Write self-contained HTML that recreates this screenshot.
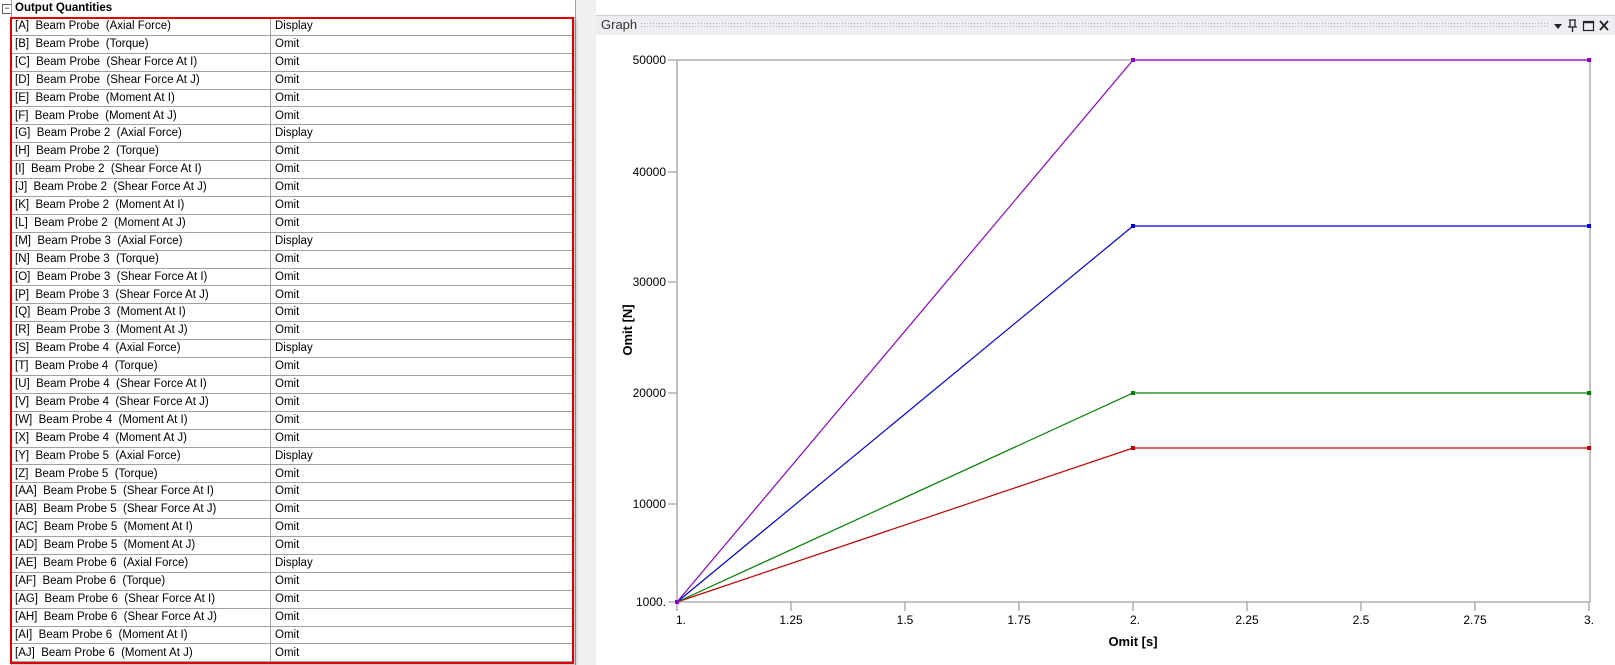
<!DOCTYPE html>
<html><head><meta charset="utf-8"><style>
body{margin:0;width:1615px;height:665px;overflow:hidden;background:#fff;font-family:"Segoe UI","Liberation Sans",sans-serif;font-size:11.5px;color:#000;position:relative}
.abs{position:absolute}
.row{position:absolute;left:11px;width:562px;height:17.9px;border-bottom:1px solid #a0a0a0;box-sizing:border-box;line-height:17px;white-space:pre}
.row span{position:absolute;left:4px}
.row b{position:absolute;left:264px;font-weight:normal}
</style></head><body>
<div class="abs" style="left:0;top:0;width:575px;height:665px;background:#fff;border-right:1px solid #a0a0a0"></div>
<div class="abs" style="left:576px;top:0;width:20px;height:665px;background:#f0f0f0"></div>
<div class="abs" style="left:2px;top:4px;width:8px;height:8px;border:1px solid #606060;background:#fff;font-size:9px;line-height:7px;text-align:center">−</div>
<div class="abs" style="left:12px;top:0;width:563px;height:18px;border-bottom:1px solid #a0a0a0;box-sizing:border-box;font-weight:bold;line-height:17px;padding-left:3px">Output Quantities</div>
<div class="abs" style="left:11px;top:0;width:1px;height:665px;background:#a0a0a0"></div>
<div id="rows"></div>
<div class="abs" style="left:270px;top:18px;width:1px;height:645px;background:#a0a0a0"></div>
<div class="abs" style="left:10px;top:17px;width:560px;height:643px;border:2px solid #e00000;box-shadow:2px 2px 3px rgba(0,0,0,.25)"></div>
<!-- graph -->
<div class="abs" style="left:596px;top:15px;width:1019px;height:20px;background:#eeeef2;border-top:1px solid #ccccd8;box-sizing:border-box"></div>
<div class="abs" style="left:601px;top:16px;font-size:13px;color:#333;line-height:18px">Graph</div>
<div class="abs" style="left:640px;top:22px;width:910px;height:5px;background-image:radial-gradient(#b0b0b0 0.6px,transparent 0.8px);background-size:3px 3px"></div>
<svg class="abs" style="left:1550px;top:15px" width="65" height="20">
<path d="M4 9h8l-4 5z" fill="#222"/>
<path d="M19 5h7M20 5v7h5V5M18 12h9M22.5 12v5" stroke="#222" fill="none" stroke-width="1.3"/>
<rect x="33.5" y="6.5" width="10" height="9" fill="none" stroke="#222" stroke-width="1.2"/><line x1="33.5" y1="7.5" x2="43.5" y2="7.5" stroke="#222" stroke-width="1.5"/>
<path d="M50 6l8 9M58 6l-8 9" stroke="#222" stroke-width="1.8"/>
</svg>
<svg class="abs" style="left:596px;top:35px" width="1019" height="630" font-family="Segoe UI, Liberation Sans, sans-serif" font-size="12">
<g transform="translate(-596,-35)">
<g stroke="#a0a0a0" stroke-width="1.3" fill="none">
<path d="M677 60V602H1590V60H677"/>
<path d="M668 60h9M668 172h9M668 282h9M668 393h9M668 504h9M668 602h9"/>
<path d="M677 602v9M791 602v9M905 602v9M1019 602v9M1133 602v9M1247 602v9M1361 602v9M1475 602v9M1589 602v9"/>
</g>
<g text-anchor="end" fill="#000">
<text x="666" y="64">50000</text><text x="666" y="176">40000</text><text x="666" y="286">30000</text><text x="666" y="397">20000</text><text x="666" y="508">10000</text><text x="666" y="606">1000.</text>
</g>
<g text-anchor="middle" fill="#000">
<text x="681" y="624">1.</text><text x="791" y="624">1.25</text><text x="905" y="624">1.5</text><text x="1019" y="624">1.75</text><text x="1135" y="624">2.</text><text x="1247" y="624">2.25</text><text x="1361" y="624">2.5</text><text x="1475" y="624">2.75</text><text x="1589" y="624">3.</text>
</g>
<text x="1133" y="646" text-anchor="middle" font-weight="bold" font-size="13">Omit [s]</text>
<text transform="translate(632,330) rotate(-90)" text-anchor="middle" font-weight="bold" font-size="13">Omit [N]</text>
<g fill="none" stroke-width="1.2">
<path d="M677 602L1133 448H1589" stroke="#c00000"/>
<path d="M677 602L1133 393H1589" stroke="#008000"/>
<path d="M677 602L1133 226H1589" stroke="#0000e0"/>
<path d="M677 602L1133 60H1589" stroke="#9000d0"/>
</g>
<g>
<rect x="1131" y="446" width="4" height="4" fill="#c00000"/><rect x="1587" y="446" width="4" height="4" fill="#c00000"/>
<rect x="1131" y="391" width="4" height="4" fill="#008000"/><rect x="1587" y="391" width="4" height="4" fill="#008000"/>
<rect x="1131" y="224" width="4" height="4" fill="#0000e0"/><rect x="1587" y="224" width="4" height="4" fill="#0000e0"/>
<rect x="1131" y="58" width="4" height="4" fill="#9000d0"/><rect x="1587" y="58" width="4" height="4" fill="#9000d0"/>
<rect x="675" y="600" width="4" height="4" fill="#9000d0"/>
</g>
</g>
</svg>
<script>
var L="ABCDEFGHIJKLMNOPQRSTUVWXYZ".split("").concat(["AA","AB","AC","AD","AE","AF","AG","AH","AI","AJ"]);
var q=["Axial Force","Torque","Shear Force At I","Shear Force At J","Moment At I","Moment At J"];
var h="";
for(var i=0;i<36;i++){var p=Math.floor(i/6)+1;var name="["+L[i]+"]  Beam Probe"+(p>1?" "+p:"")+"  ("+q[i%6]+")";
h+='<div class="row" style="top:'+(18+i*17.9).toFixed(1)+'px"><span>'+name+'</span><b>'+(i%6==0?"Display":"Omit")+'</b></div>';}
document.getElementById("rows").innerHTML=h;
</script>
</body></html>
